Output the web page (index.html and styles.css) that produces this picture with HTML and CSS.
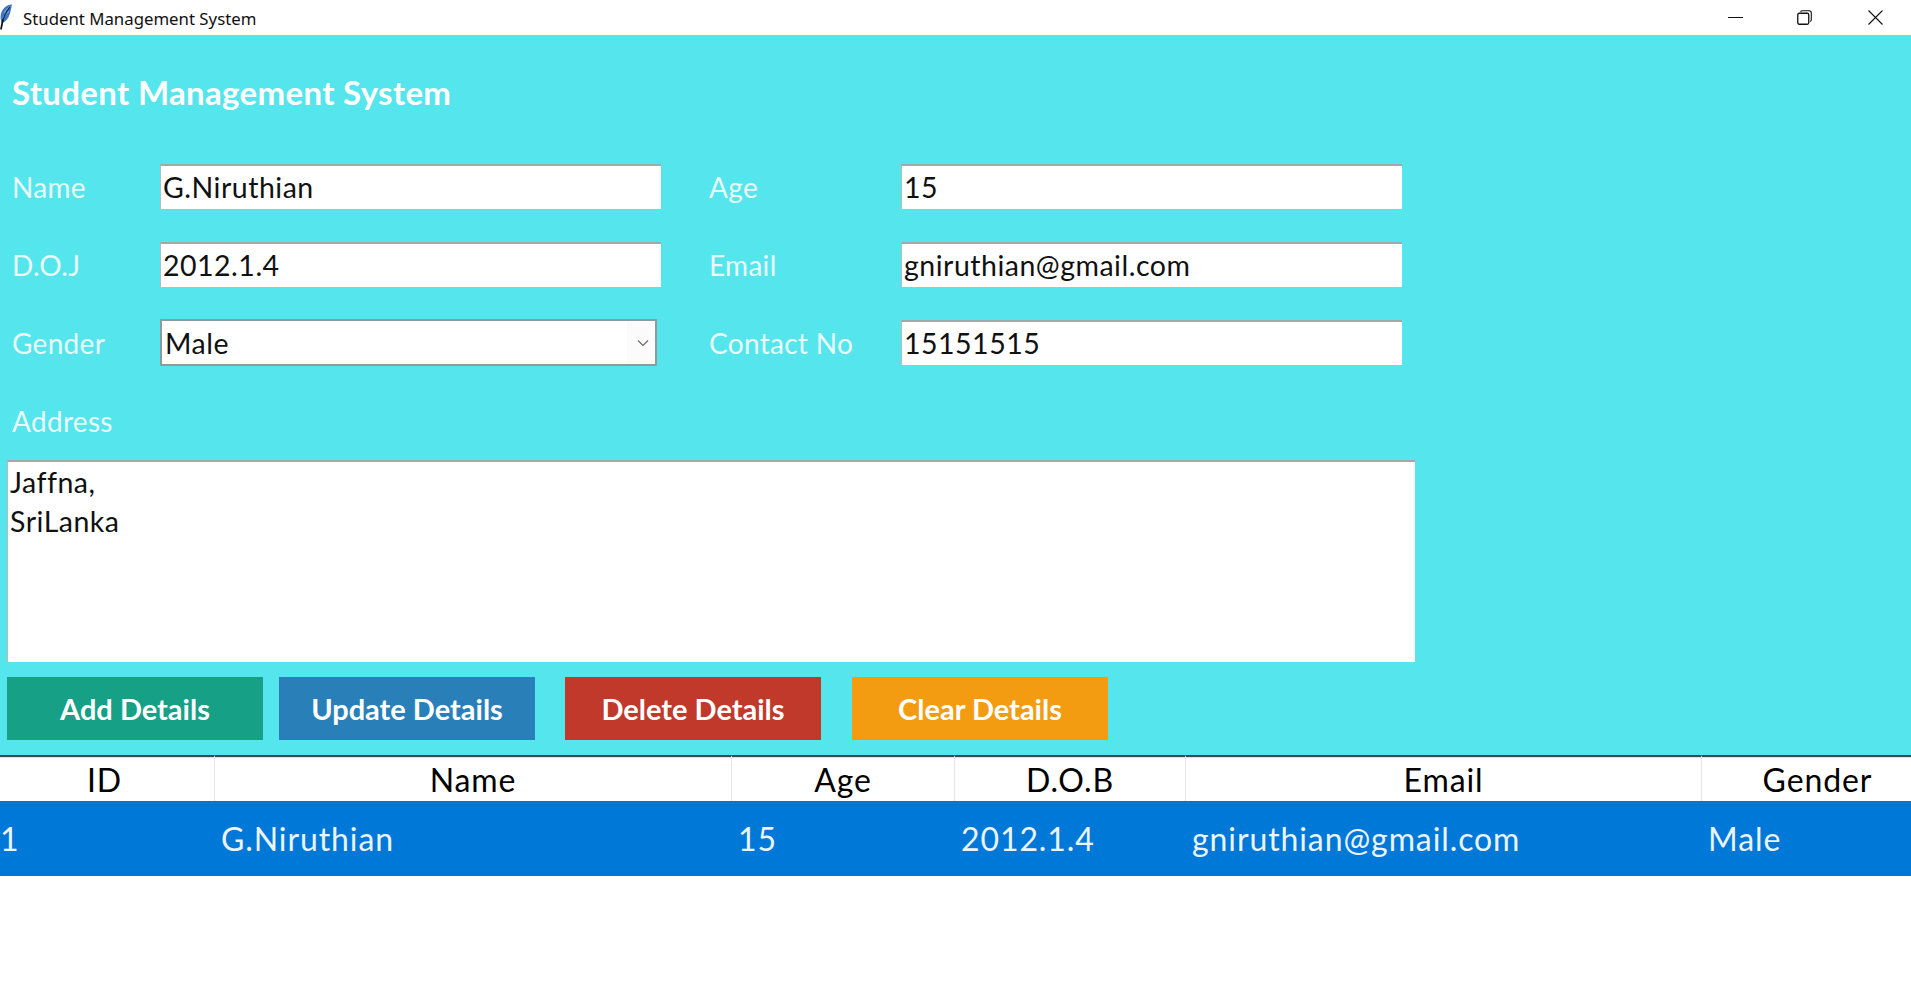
FILE: index.html
```html
<!DOCTYPE html>
<html lang="en">
<head>
<meta charset="utf-8">
<title>Student Management System</title>
<link rel="stylesheet" href="styles.css">
</head>
<body>
<header class="titlebar">
  <svg class="feather" viewBox="0 0 12 26" aria-hidden="true">
    <path d="M11.800 .3C6.500 1 1.800 5 .8 10.500C.3 13.500 .6 16.500 1.800 19C5.500 18 8.200 14.500 9.600 10.500C10.800 7 11.500 3.500 11.800 .3z" fill="#3e76c0"/>
    <path d="M9.500 3C7 5 5 7 4 9M9 7.500C7.500 8.500 5.500 10.500 3.500 13" stroke="#9cc0ec" stroke-width=".8" fill="none"/>
    <path d="M9.800 3C6.800 7 3.800 12 2.400 18.500" stroke="#12233d" stroke-width="1.100" fill="none"/>
    <path d="M3 15.500L.9 25.500" stroke="#111" stroke-width="1.700" fill="none"/>
  </svg>
  <span class="window-title">Student Management System</span>
  <div class="window-controls">
    <svg class="ctl ctl-min" viewBox="0 0 15 15" aria-hidden="true"><path d="M0 7.500H15" stroke="#111" stroke-width="1" fill="none"/></svg>
    <svg class="ctl ctl-restore" viewBox="0 0 15 15" aria-hidden="true"><rect x=".75" y="3.250" width="11" height="11" rx="1.500" stroke="#111" stroke-width="1.300" fill="none"/><path d="M3.500 1.800C3.900 .9 4.500 .7 5.500 .7H12c1.400 0 2.300.9 2.300 2.300V9.500c0 1-.3 1.600-1.100 2" stroke="#111" stroke-width="1.100" fill="none"/></svg>
    <svg class="ctl ctl-close" viewBox="0 0 15 15" aria-hidden="true"><path d="M.5.5L14.500 14.500M14.500.5L.5 14.500" stroke="#111" stroke-width="1.100" fill="none"/></svg>
  </div>
</header>

<main class="panel">
  <h1 class="heading">Student Management System</h1>
  <div class="form">
    <div class="label">Name</div>
    <div class="field">G.Niruthian</div>
    <div class="label label-right">Age</div>
    <div class="field field-right">15</div>

    <div class="label">D.O.J</div>
    <div class="field">2012.1.4</div>
    <div class="label label-right">Email</div>
    <div class="field field-right">gniruthian@gmail.com</div>

    <div class="label">Gender</div>
    <div class="combo">
      <span class="combo-value">Male</span>
      <span class="combo-arrow">
        <svg viewBox="0 0 12 8" aria-hidden="true"><path d="M1 1.500L6 6.500L11 1.500" stroke="#666" stroke-width="1.100" fill="none"/></svg>
      </span>
    </div>
    <div class="label label-right">Contact No</div>
    <div class="field field-right">15151515</div>

    <div class="label">Address</div>
  </div>
  <div class="address">Jaffna,
SriLanka</div>
  <div class="actions">
    <button class="btn btn-add">Add Details</button>
    <button class="btn btn-update">Update Details</button>
    <button class="btn btn-delete">Delete Details</button>
    <button class="btn btn-clear">Clear Details</button>
  </div>
</main>

<section class="table">
  <div class="th th-first">ID</div>
  <div class="th">Name</div>
  <div class="th">Age</div>
  <div class="th">D.O.B</div>
  <div class="th">Email</div>
  <div class="th">Gender</div>
  <div class="td td-first">1</div>
  <div class="td">G.Niruthian</div>
  <div class="td">15</div>
  <div class="td">2012.1.4</div>
  <div class="td">gniruthian@gmail.com</div>
  <div class="td">Male</div>
</section>
</body>
</html>
```

FILE: styles.css
```css
* { box-sizing: border-box; }
html, body { margin: 0; height: 100%; background: #fff; overflow: hidden; }
body { font-family: "Lato", "Liberation Sans", sans-serif; color: #111; }

.titlebar { height: 35px; display: flex; align-items: center; background: #fff; }
.feather { width: 12px; height: 26px; flex: none; margin-top: -2px; }
.window-title { font-family: "Noto Sans", "Open Sans", sans-serif; font-size: 16.8px; margin-left: 11px; color: #111; margin-top: 1px; }
.window-controls { margin-left: auto; display: flex; align-items: center; padding-right: 28px; }
.ctl { width: 15px; height: 15px; display: block; }
.ctl-min { margin-right: 54px; }
.ctl-restore { margin-right: 56px; margin-top: -1px; }
.ctl-close { margin-top: -1px; }

.panel { height: 720px; background: #54e5ed; padding-left: 7px; }
.heading { margin: 0; height: 129px; padding: 37px 0 0 5px; font-size: 33px; font-weight: 700; letter-spacing: .33px; line-height: 40px; color: #fff; }

.form { display: grid; grid-template-columns: 148px 501px 48px 192px 501px; grid-auto-rows: 45px; row-gap: 33px; padding-left: 5px; }
.label { grid-column: 1; font-size: 28px; letter-spacing: .3px; color: #e9fbfc; line-height: 46px; }
.label-right { grid-column: 4; }
.field, .combo { grid-column: 2; }
.field-right { grid-column: 5; }

.field { height: 45px; background: #fff; border-top: 2px solid #a3a8a9; border-left: 1px solid #b5bcbd; padding-left: 2px; font-size: 28.5px; letter-spacing: .5px; line-height: 42px; color: #111; overflow: hidden; white-space: nowrap; }
.combo { width: 497px; height: 47px; margin-top: -1px; background: #fff; border: 2px solid #8e9a9c; border-radius: 1px; display: flex; font-size: 28.5px; letter-spacing: .5px; line-height: 44px; }
.combo-value { flex: 1; padding-left: 3px; }
.combo-arrow { width: 28px; background: #fbfbfb; display: flex; align-items: center; justify-content: center; padding-left: 4px; }
.combo-arrow svg { width: 12px; height: 8px; }

.address { width: 1408px; height: 202px; margin-top: 17px; background: #fff; border-top: 2px solid #a3a8a9; border-left: 1px solid #b5bcbd; padding: 1px 0 0 2px; font-size: 28.5px; letter-spacing: .5px; line-height: 39px; white-space: pre-line; color: #111; }

.actions { display: flex; margin-top: 15px; }
.btn { width: 256px; height: 63px; border: 0; padding: 0; font-family: inherit; font-size: 29px; font-weight: 700; color: #fff; }
.btn-add { background: #16a085; }
.btn-update { background: #2980b9; margin-left: 16px; }
.btn-delete { background: #c0392b; margin-left: 30px; }
.btn-clear { background: #f39c12; margin-left: 31px; }

.table { display: grid; width: 1934px; grid-template-columns: 215px 517px 223px 231px 516px 232px; grid-template-rows: 46px 75px; }
.th { border-top: 2px solid #3c4a50; box-shadow: inset 0 1px 0 #e0e0e0; border-right: 1px solid #e5e5e5; text-align: center; font-size: 32px; letter-spacing: .9px; line-height: 46px; color: #000; background: #fff; }
.th-first { padding-right: 5px; }
.td { background: #0078d7; color: #eaf4fc; font-size: 32px; letter-spacing: .9px; line-height: 76px; padding-left: 6px; white-space: nowrap; }
.td-first { padding-left: 0; }
```
